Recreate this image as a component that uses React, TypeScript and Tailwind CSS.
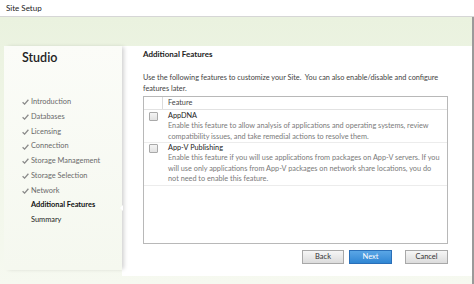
import React from "react";

const navDone = ["Introduction", "Databases", "Licensing", "Connection", "Storage Management", "Storage Selection", "Network"];

function Check() {
  return (
    <svg width="7" height="6" viewBox="0 0 7 6" className="shrink-0">
      <path d="M0.6 3.2 L2.6 5.1 L6.4 0.8" fill="none" stroke="#8a8a8a" strokeWidth="1.3" />
    </svg>
  );
}

function Box() {
  return <div className="w-[9px] h-[9px] border border-[#a9a9a9] bg-gradient-to-b from-[#f4f4f4] to-[#e2e2e2] rounded-[1px] shrink-0" />;
}

export default function App() {
  return (
    <div className="w-[474px] h-[284px] flex flex-col overflow-hidden bg-white" style={{ fontFamily: 'Lato, "Noto Sans", sans-serif' }}>
      <div className="h-[17px] bg-white border-b border-[#d6d6d6] flex items-center pl-[6px] text-[8px] text-[#222]">Site Setup</div>
      <div className="flex-1 flex flex-col bg-gradient-to-b from-[#eaf2df] to-[#f6f9f0] border-r-[2px] border-[#9a9a9a]">
        <div className="flex flex-1 pt-[29px] pb-[8px]">
          <div className="w-[118px] ml-[4px] mb-[6px] bg-gradient-to-b from-[#fbfcf8] to-[#f5f8ef] flex flex-col pl-[18px] relative shadow-[3px_0_4px_-1px_rgba(0,0,0,0.18)]">
            <div className="text-[12.5px] font-semibold text-[#222] mt-[3px] leading-[18px]">Studio</div>
            <div className="flex flex-col mt-[28px] text-[7.4px] leading-[14.75px]">
              {navDone.map((n) => (
                <div key={n} className="flex items-center gap-[2px] text-[#6a6a6a]">
                  <Check />
                  <span>{n}</span>
                </div>
              ))}
              <div className="pl-[9px] font-bold text-[#111]">Additional Features</div>
              <div className="pl-[9px] text-[#222]">Summary</div>
            </div>
            <div className="absolute right-[-1px] top-[159px] w-0 h-0 border-y-[3px] border-y-transparent border-r-[3px] border-r-white" />
          </div>
          <div className="flex-1 bg-white flex flex-col pl-[21px] pr-[24px] pt-[1px]">
            <div className="text-[8px] font-bold text-[#222] leading-[14px]">Additional Features</div>
            <div className="mt-[11px] text-[7.3px] leading-[11px] text-[#444]">
              Use the following features to customize your Site.&nbsp; You can also enable/disable and configure features later.
            </div>
            <div className="mt-[2px] h-[148px] border border-[#b8b8b8] flex flex-col">
              <div className="flex h-[13px] border-b border-[#e2e2e2] bg-white text-[7.3px] text-[#444] items-center">
                <div className="w-[19px] h-full border-r border-[#dcdcdc]" />
                <div className="pl-[5px]">Feature</div>
              </div>
              <div className="flex border-b border-[#ececec]">
                <div className="w-[19px] flex justify-center pt-[2px]"><Box /></div>
                <div className="flex-1 pl-[5px] pr-[4px]">
                  <div className="text-[7.3px] leading-[11px] text-[#222]">AppDNA</div>
                  <div className="text-[7.3px] leading-[10.5px] text-[#7a7a7a]">Enable this feature to allow analysis of applications and operating systems, review compatibility issues, and take remedial actions to resolve them.</div>
                </div>
              </div>
              <div className="flex border-b border-[#ececec]">
                <div className="w-[19px] flex justify-center pt-[1px]"><Box /></div>
                <div className="flex-1 pl-[5px] pr-[4px]">
                  <div className="text-[7.3px] leading-[10px] text-[#222]">App-V Publishing</div>
                  <div className="text-[7.3px] leading-[10.5px] text-[#7a7a7a]">Enable this feature if you will use applications from packages on App-V servers. If you will use only applications from App-V packages on network share locations, you do not need to enable this feature.</div>
                </div>
              </div>
            </div>
            <div className="flex justify-end mt-[6px] text-[7.5px]">
              <button className="w-[42px] h-[14px] border border-[#a8a8a8] bg-gradient-to-b from-[#f6f6f6] to-[#dcdcdc] text-[#333] leading-none">Back</button>
              <button className="w-[43px] h-[14px] ml-[5px] border border-[#2a6fb8] bg-gradient-to-b from-[#5aa6e6] to-[#2f86d3] text-white leading-none">Next</button>
              <button className="w-[43px] h-[14px] ml-[13px] border border-[#a8a8a8] bg-gradient-to-b from-[#f6f6f6] to-[#dcdcdc] text-[#333] leading-none">Cancel</button>
            </div>
          </div>
        </div>
      </div>
    </div>
  );
}
